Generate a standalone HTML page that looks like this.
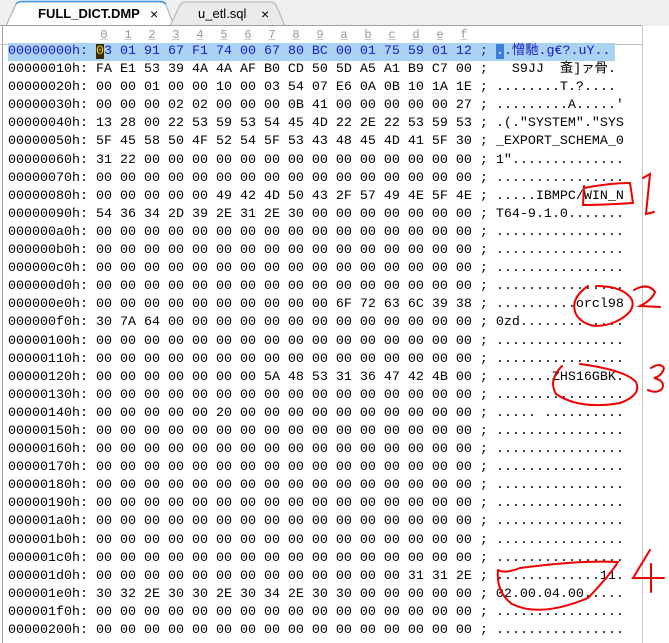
<!DOCTYPE html>
<html><head><meta charset="utf-8"><style>
body{margin:0;width:669px;height:643px;background:#fff;position:relative;overflow:hidden;font-family:"Liberation Sans",sans-serif}
.tabbar{position:absolute;left:0;top:0;width:669px;height:26px;background:#f0f0f0}
.tab{position:absolute;top:2px;height:24px;font-size:13px;line-height:24px}
.sep{position:absolute;left:0;top:25px;width:642px;height:1px;background:#a0a0a0}
.area{position:absolute;left:2px;top:26px;width:639px;height:617px;background:#fff;border-left:1px solid #a0a0a0;border-right:1px solid #c8c8c8}
.hdr{position:absolute;left:0;top:27px;width:642px;height:17px;border-bottom:1px solid #c0c0c0}
pre{position:absolute;left:8px;top:43px;margin:0;font-family:"Liberation Mono",monospace;font-size:13.33px;line-height:18.1px;color:#000}
.hl{position:absolute;left:8px;top:43px;width:607px;height:18px;background:#a9d3f0}
.cur{background:#3b2a05;color:#f0d000}
.ch{position:absolute;top:28px;font-family:"Liberation Mono",monospace;font-size:12px;color:#999;width:12px;text-align:center;text-decoration:underline;text-decoration-color:#ccc}
</style></head><body>
<div class="tabbar"></div>
<svg style="position:absolute;left:0;top:0" width="300" height="27">
<path d="M6 26 L16 4 Q18 2 22 2 L160 2 Q164 2 166 5 L174 26" fill="#fff" stroke="#a8a8a8"/>
<path d="M16 4 Q18 1.5 22 1.5 L160 1.5 Q164 1.5 166 4" fill="none" stroke="#3c9ae8" stroke-width="1.5"/>
<path d="M170 26 L180 5 Q182 2 186 2 L270 2 Q274 2 276 5 L285 26" fill="#eaeaea" stroke="#b0b0b0"/>
</svg>
<div class="sep"></div>
<div class="tab" style="left:38px;font-weight:bold">FULL_DICT.DMP</div>
<div class="tab" style="left:150px;font-size:14px">×</div>
<div class="tab" style="left:198px">u_etl.sql</div>
<div class="tab" style="left:261px;font-size:14px">×</div>
<div class="area"></div>
<div class="hdr"></div>
<div class="ch" style="left:98px">0</div><div class="ch" style="left:122px">1</div><div class="ch" style="left:146px">2</div><div class="ch" style="left:170px">3</div>
<div class="ch" style="left:194px">4</div><div class="ch" style="left:218px">5</div><div class="ch" style="left:242px">6</div><div class="ch" style="left:266px">7</div>
<div class="ch" style="left:290px">8</div><div class="ch" style="left:314px">9</div><div class="ch" style="left:338px">a</div><div class="ch" style="left:362px">b</div>
<div class="ch" style="left:386px">c</div><div class="ch" style="left:410px">d</div><div class="ch" style="left:434px">e</div><div class="ch" style="left:458px">f</div>
<div class="hl"></div>
<pre><span style="color:#1a1acc">00000000h: <span class="cur">0</span>3 01 91 67 F1 74 00 67 80 BC 00 01 75 59 01 12 ; <span style="background:#3c7ee0;color:#fff">.</span>.憎馳.g€?.uY..</span>
00000010h: FA E1 53 39 4A 4A AF B0 CD 50 5D A5 A1 B9 C7 00 ;   S9JJ  蚉]ァ骨.
00000020h: 00 00 01 00 00 10 00 03 54 07 E6 0A 0B 10 1A 1E ; ........T.?....
00000030h: 00 00 00 02 02 00 00 00 0B 41 00 00 00 00 00 27 ; .........A.....'
00000040h: 13 28 00 22 53 59 53 54 45 4D 22 2E 22 53 59 53 ; .(."SYSTEM"."SYS
00000050h: 5F 45 58 50 4F 52 54 5F 53 43 48 45 4D 41 5F 30 ; _EXPORT_SCHEMA_0
00000060h: 31 22 00 00 00 00 00 00 00 00 00 00 00 00 00 00 ; 1"..............
00000070h: 00 00 00 00 00 00 00 00 00 00 00 00 00 00 00 00 ; ................
00000080h: 00 00 00 00 00 49 42 4D 50 43 2F 57 49 4E 5F 4E ; .....IBMPC/WIN_N
00000090h: 54 36 34 2D 39 2E 31 2E 30 00 00 00 00 00 00 00 ; T64-9.1.0.......
000000a0h: 00 00 00 00 00 00 00 00 00 00 00 00 00 00 00 00 ; ................
000000b0h: 00 00 00 00 00 00 00 00 00 00 00 00 00 00 00 00 ; ................
000000c0h: 00 00 00 00 00 00 00 00 00 00 00 00 00 00 00 00 ; ................
000000d0h: 00 00 00 00 00 00 00 00 00 00 00 00 00 00 00 00 ; ................
000000e0h: 00 00 00 00 00 00 00 00 00 00 6F 72 63 6C 39 38 ; ..........orcl98
000000f0h: 30 7A 64 00 00 00 00 00 00 00 00 00 00 00 00 00 ; 0zd.............
00000100h: 00 00 00 00 00 00 00 00 00 00 00 00 00 00 00 00 ; ................
00000110h: 00 00 00 00 00 00 00 00 00 00 00 00 00 00 00 00 ; ................
00000120h: 00 00 00 00 00 00 00 5A 48 53 31 36 47 42 4B 00 ; .......ZHS16GBK.
00000130h: 00 00 00 00 00 00 00 00 00 00 00 00 00 00 00 00 ; ................
00000140h: 00 00 00 00 00 20 00 00 00 00 00 00 00 00 00 00 ; ..... ..........
00000150h: 00 00 00 00 00 00 00 00 00 00 00 00 00 00 00 00 ; ................
00000160h: 00 00 00 00 00 00 00 00 00 00 00 00 00 00 00 00 ; ................
00000170h: 00 00 00 00 00 00 00 00 00 00 00 00 00 00 00 00 ; ................
00000180h: 00 00 00 00 00 00 00 00 00 00 00 00 00 00 00 00 ; ................
00000190h: 00 00 00 00 00 00 00 00 00 00 00 00 00 00 00 00 ; ................
000001a0h: 00 00 00 00 00 00 00 00 00 00 00 00 00 00 00 00 ; ................
000001b0h: 00 00 00 00 00 00 00 00 00 00 00 00 00 00 00 00 ; ................
000001c0h: 00 00 00 00 00 00 00 00 00 00 00 00 00 00 00 00 ; ................
000001d0h: 00 00 00 00 00 00 00 00 00 00 00 00 00 31 31 2E ; .............11.
000001e0h: 30 32 2E 30 30 2E 30 34 2E 30 30 00 00 00 00 00 ; 02.00.04.00.....
000001f0h: 00 00 00 00 00 00 00 00 00 00 00 00 00 00 00 00 ; ................
00000200h: 00 00 00 00 00 00 00 00 00 00 00 00 00 00 00 00 ; ................</pre>
<svg style="position:absolute;left:0;top:0" width="669" height="643" fill="none" stroke="#e00" stroke-width="2" stroke-linecap="round">
<path d="M584 186 L583 205 Q600 205 633 203 L630 183 Q610 183 584 188"/>
<path d="M643 178 L650 174 L646 214 L654 212"/>
<path d="M588 286 Q568 300 577 316 Q590 332 615 322 Q636 312 632 300 Q624 286 596 286"/>
<path d="M634 290 Q648 282 655 292 Q652 300 640 306 L660 307"/>
<path d="M562 366 Q548 380 556 394 Q580 410 620 403 Q642 395 636 382 Q625 370 580 364"/>
<path d="M651 368 Q660 362 664 368 Q662 376 654 378 Q666 381 662 389 Q656 394 648 390"/>
<path d="M498 570 Q496 592 512 604 Q540 618 588 598 Q610 575 618 562 Q580 560 520 568 Q505 574 498 570"/>
<path d="M650 550 L633 578 L664 578 M651 564 L651 592"/>
</svg>
</body></html>
